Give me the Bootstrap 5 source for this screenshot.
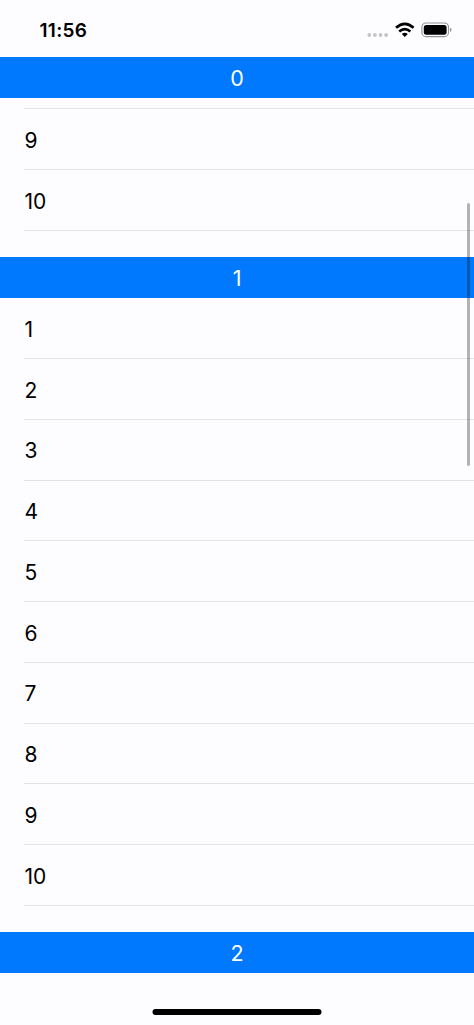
<!DOCTYPE html>
<html lang="en">
<head>
<meta charset="utf-8">
<meta name="viewport" content="width=device-width, initial-scale=1">
<title>Sections</title>
<link href="https://cdn.jsdelivr.net/npm/bootstrap@5.3.0/dist/css/bootstrap.min.css" rel="stylesheet">
<style>
body { font-family: Inter, "Liberation Sans", sans-serif; background: #fdfcff; color: #000; }
.screen { height: 1025px; }
.status-bar { height: 57.2px; padding: 4px 20px 0 39.5px; }
.clock { font-size: 19px; font-weight: 600; letter-spacing: .3px; padding-top: 2px; }
.section-title { height: 41.2px; background: #0079ff; color: #fff; font-size: 21.5px; line-height: 42.6px; }
.rows { padding-left: 24px; font-size: 21px; }
.rows .list-group-item { height: 60.76px; padding: 3px 0 0 .5px; color: #000; background: transparent; border-color: #e3e2e5; border-width: 0 0 1px; }
.rows .list-group-item:last-child { border-bottom-width: 1px; }
.rows .list-group-item.clipped { height: 10.9px; padding: 0; }
.section-gap { height: 26.3px; }
.scroll-thumb { top: 203px; right: 4px; width: 3.5px; height: 263px; background: rgba(0,0,0,.29); }
.home-bar { bottom: 10px; width: 169px; height: 6px; background: #000; }
</style>
</head>
<body>
<div class="screen position-relative overflow-hidden d-flex flex-column">
  <header class="status-bar d-flex align-items-center justify-content-between flex-shrink-0">
    <span class="clock">11:56</span>
    <svg width="88" height="20" viewBox="0 0 88 20" aria-hidden="true">
      <g fill="#c5c4c8"><circle cx="3.3" cy="14" r="1.9"/><circle cx="8.9" cy="14" r="1.9"/><circle cx="14.5" cy="14" r="1.9"/><circle cx="20.1" cy="14" r="1.9"/></g>
      <g transform="translate(2 .5)">
        <g fill="none" stroke="#000" stroke-width="2.7"><path d="M28 6.3Q36.8-1.6 45.6 6.3"/><path d="M31.2 10Q36.8 5.1 42.4 10"/></g>
        <path d="M33.8 12.5Q36.8 10 39.8 12.5L36.8 15.6Z"/>
        <rect x="53.9" y="1.5" width="26.6" height="13.6" rx="4.2" fill="none" stroke="#929195" stroke-width="1.1"/>
        <rect x="55.8" y="3.4" width="22.8" height="9.8" rx="2.5"/>
        <path d="M82 6.2Q83.6 6.8 83.6 8.3T82 10.4Z" fill="#929195"/>
      </g>
    </svg>
  </header>
  <main class="flex-shrink-0">
    <section>
      <div class="section-title text-center">0</div>
      <ul class="rows list-group list-group-flush">
        <li class="list-group-item clipped"></li>
        <li class="list-group-item d-flex align-items-center">9</li>
        <li class="list-group-item d-flex align-items-center">10</li>
      </ul>
      <div class="section-gap"></div>
    </section>
    <section>
      <div class="section-title text-center">1</div>
      <ul class="rows list-group list-group-flush">
        <li class="list-group-item d-flex align-items-center">1</li>
        <li class="list-group-item d-flex align-items-center">2</li>
        <li class="list-group-item d-flex align-items-center">3</li>
        <li class="list-group-item d-flex align-items-center">4</li>
        <li class="list-group-item d-flex align-items-center">5</li>
        <li class="list-group-item d-flex align-items-center">6</li>
        <li class="list-group-item d-flex align-items-center">7</li>
        <li class="list-group-item d-flex align-items-center">8</li>
        <li class="list-group-item d-flex align-items-center">9</li>
        <li class="list-group-item d-flex align-items-center">10</li>
      </ul>
      <div class="section-gap"></div>
    </section>
    <section>
      <div class="section-title text-center">2</div>
    </section>
  </main>
  <div class="scroll-thumb position-absolute rounded-pill"></div>
  <div class="home-bar position-absolute start-50 translate-middle-x rounded-pill"></div>
</div>
<script src="https://cdn.jsdelivr.net/npm/bootstrap@5.3.0/dist/js/bootstrap.bundle.min.js"></script>
</body>
</html>
